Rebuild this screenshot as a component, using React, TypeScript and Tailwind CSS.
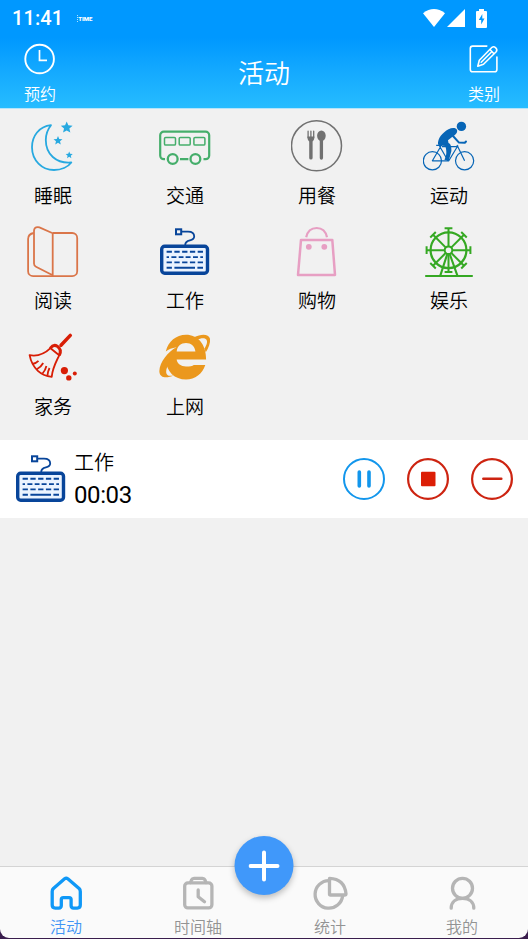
import type { ReactNode } from 'react';

const star = (cx: number, cy: number, r: number) =>
  Array.from({ length: 10 }, (_, i) => {
    const d = i % 2 ? r * 0.45 : r;
    const a = (Math.PI / 5) * i - Math.PI / 2;
    return `${cx + d * Math.cos(a)},${cy + d * Math.sin(a)}`;
  }).join(' ');

function Icon({ children, className }: { children: ReactNode; className?: string }) {
  return (
    <svg viewBox="0 0 52 52" className={`h-[52px] w-[52px] shrink-0 ${className ?? ''}`} fill="none" stroke="currentColor" strokeLinejoin="round">
      {children}
    </svg>
  );
}

function MoonIcon() {
  return (
    <Icon className="text-[#27a9e0]">
      <path d="M24 5.2C12 6.5 5 16 5 27.2C5 40.3 15 50 27 50C34 50 41 47 44.3 42.5C29 43.8 18.8 34 18.8 20C18.8 14.5 20.7 9.3 24 5.2Z" strokeWidth="1.8" />
      <g fill="currentColor" stroke="none">
        <polygon points={star(39.7, 7.6, 6.2)} />
        <polygon points={star(31, 20.6, 4.7)} />
        <polygon points={star(42.2, 35.2, 3.7)} />
      </g>
    </Icon>
  );
}

function BusIcon() {
  return (
    <Icon className="text-[#45ae6b]">
      <path d="M6 39.2H4.8A3.6 3.6 0 0 1 1.2 35.6V15.2A3.6 3.6 0 0 1 4.8 11.6H46.6A3.6 3.6 0 0 1 50.2 15.2V35.6A3.6 3.6 0 0 1 46.6 39.2H44.5M21 39.2H29.4" strokeWidth="2.2" />
      <rect x="5.5" y="17.4" width="11" height="7.7" rx="1.2" strokeWidth="1.5" />
      <rect x="20.2" y="17.4" width="11" height="7.7" rx="1.2" strokeWidth="1.5" />
      <rect x="34.9" y="17.4" width="11" height="7.7" rx="1.2" strokeWidth="1.5" />
      <circle cx="13.7" cy="39" r="4.9" strokeWidth="2.3" />
      <circle cx="36.4" cy="39" r="4.9" strokeWidth="2.3" />
    </Icon>
  );
}

function DiningIcon() {
  return (
    <Icon className="text-[#717171]">
      <circle cx="25.5" cy="25.8" r="25" strokeWidth="1.5" />
      <path d="M17.1 11.2V17.5M19.9 11.2V17.5M22.7 11.2V17.5" strokeWidth="1.3" strokeLinecap="round" />
      <path d="M16.5 16.5H23.3V18C23.3 20 22 21 21.6 21.5V38Q21.6 39.6 19.9 39.6Q18.2 39.6 18.2 38V21.5C17.8 21 16.5 20 16.5 18Z" fill="currentColor" stroke="none" />
      <ellipse cx="30.4" cy="15.8" rx="4.3" ry="5.3" fill="currentColor" stroke="none" />
      <path d="M30.4 19V38" strokeWidth="3.3" strokeLinecap="round" />
    </Icon>
  );
}

function BikeIcon() {
  return (
    <Icon className="text-[#0765b6]">
      <circle cx="9.4" cy="40.8" r="9.1" strokeWidth="1.2" />
      <circle cx="41.6" cy="40.8" r="9.1" strokeWidth="1.2" />
      <path d="M18 26L9.4 40.8H25.8L35 25.5M16.5 26L25 40.8M34 25L41.6 40.8M19 26.6H34.5M13.2 25.3H19" strokeWidth="1.2" />
      <circle cx="38.4" cy="6.4" r="4.7" fill="currentColor" stroke="none" />
      <path d="M15 24.5C14.5 18.5 19.5 12.5 25.5 9.3C29 7.5 33 7.6 34 10C34.8 12 33 14.6 30.4 16L25 20.2L25.5 23C28 24 28.5 27 28.4 31L25.8 40.8L21.4 39.8C23.5 36 24 32 22.4 26L17 25.4Z" fill="currentColor" stroke="none" />
      <path d="M30 16L36 22.6L41.8 22.8L43 21.5" strokeWidth="2" strokeLinecap="round" />
    </Icon>
  );
}

function BookIcon() {
  return (
    <Icon className="text-[#da7549]">
      <path d="M25.7 7H45.2A5 5 0 0 1 50.2 12V45.2A5 5 0 0 1 45.2 50.2H6.1A5 5 0 0 1 1.1 45.2V13Q1.1 8 6.8 7" strokeWidth="1.8" />
      <path d="M10.8 1.1Q7 1.1 7 5V37.5Q7 39.8 9 40.7L25.7 49.3V7.2L12.4 1.4Q11.6 1.1 10.8 1.1Z" strokeWidth="1.8" />
    </Icon>
  );
}

function KeyboardIcon() {
  return (
    <Icon className="text-[#08459a]">
      <rect x="2.7" y="20.2" width="45.8" height="27" rx="3" strokeWidth="3.4" fill="#eaf3ff" />
      <path d="M26.2 19C26.2 12.5 35.2 16.3 35.2 10.5C35.2 6.8 32.5 5.7 29 5.7H23" strokeWidth="1.8" />
      <rect x="17" y="3.3" width="5.2" height="5" strokeWidth="2" strokeLinejoin="miter" />
      <path d="M7.6 25.8H44M7.6 36.4H44" strokeWidth="1.9" strokeDasharray="5.3 2.47" />
      <path d="M7.6 31.1H10M12.4 31.1H17.4M19.7 31.1H24.5M26.6 31.1H31.6M34 31.1H38.9M41.3 31.1H44" strokeWidth="1.9" />
      <path d="M7.6 41.8H12.9M15.4 41.8H36M38.4 41.8H44" strokeWidth="1.9" />
    </Icon>
  );
}

function BagIcon() {
  return (
    <Icon className="text-[#e79fc3]">
      <path d="M10 13.9H41.3L44 49H7Z" strokeWidth="2.5" />
      <path d="M15.2 11.2C16.5 5.3 20.3 2 25.7 2S34.7 5.3 36 11.2" strokeWidth="2.2" />
      <circle cx="17.8" cy="20.8" r="2.9" fill="currentColor" stroke="none" />
      <circle cx="33.3" cy="20.8" r="2.9" fill="currentColor" stroke="none" />
    </Icon>
  );
}

function FerrisWheelIcon() {
  return (
    <Icon className="text-[#35a823]">
      <circle cx="25.5" cy="24.2" r="17.9" strokeWidth="2.2" />
      <circle cx="25.5" cy="24.2" r="3.8" strokeWidth="2" />
      {[0, 45, 90, 135, 180, 225, 270, 315].map((deg) => (
        <path key={deg} d="M25.5 20.5V2.3M21.6 2.3H29.4" strokeWidth="2" transform={`rotate(${deg} 25.5 24.2)`} />
      ))}
      <path d="M24.3 28L17.3 49.6M26.7 28L34.4 49.6" strokeWidth="2.1" />
      <path d="M3 50H49" strokeWidth="2.1" strokeLinecap="round" />
    </Icon>
  );
}

function BroomIcon() {
  return (
    <Icon className="text-[#d81e06]">
      <path d="M34 14.2L43.3 4.4" strokeWidth="3.5" strokeLinecap="round" />
      <path d="M2.6 24.2C10 25.5 17.5 23 23.5 17.2L32.2 24.3C29 31 25.5 37 24.7 45.8C14.5 44.8 5.3 38 2.6 24.2Z" strokeWidth="1.8" />
      <path d="M23.2 17.3C25.5 14.2 28 13.8 30.3 15.3C33.5 17.5 34 21 32.3 24.4" strokeWidth="3" />
      <path d="M5.5 33C8.5 32.3 10 31.3 11.5 29.8M9.8 38.3C13.2 36.4 14.8 34.6 16.2 32M15.5 42.5C18 39.8 18.8 37.8 19.4 35M20.4 44.7C20.6 41 21.5 39 22.5 37" strokeWidth="1.8" />
      <g fill="currentColor" stroke="none">
        <circle cx="37.4" cy="39.6" r="3.6" />
        <circle cx="41.8" cy="46.9" r="2.7" />
        <circle cx="47.8" cy="42.6" r="2" />
      </g>
    </Icon>
  );
}

// browser logo: letter body plus the two visible parts of the orbit
function BrowserIcon() {
  return (
    <Icon className="text-[#eb981d]">
      <g fill="currentColor" stroke="none" fillRule="evenodd">
        <path d="M6.8 20.5C9.3 10.5 17 3.8 27 3.8C38.5 3.8 47.3 13 47.1 28.6H17.7C18 32.7 22 35.6 27 35.6C30.8 35.6 33.4 35 34.8 34H46.3C43.5 42.7 36 48.5 27 48.5C15.5 48.5 7.6 40.5 6.8 29.5C9.5 24 13.5 19.5 17.5 16.3C13 17 9.5 18.3 6.8 20.5ZM17.7 20.6H36.4C36 15.2 32 11.9 27 11.9S18 15.2 17.7 20.6Z" />
        <path d="M17.5 16.3C9 20.5 -.3 32.5 .4 41C1 47.5 8.5 47.5 14.8 44.2C10.5 45.6 7.6 44.8 7.2 41.5C7 38.5 8.2 35.8 9.3 33.8L12 24Z" />
        <path d="M35 6.2C42 2.8 49.7 2.6 51 7.7C51.6 12 49.5 17 46.8 21.3L45.4 17.5C48 13.8 48.8 10.2 47.3 8.4C45.5 6.5 41.3 7.2 38.3 8.8Z" />
      </g>
    </Icon>
  );
}

const activities = [
  { name: '睡眠', icon: <MoonIcon /> },
  { name: '交通', icon: <BusIcon /> },
  { name: '用餐', icon: <DiningIcon /> },
  { name: '运动', icon: <BikeIcon /> },
  { name: '阅读', icon: <BookIcon /> },
  { name: '工作', icon: <KeyboardIcon /> },
  { name: '购物', icon: <BagIcon /> },
  { name: '娱乐', icon: <FerrisWheelIcon /> },
  { name: '家务', icon: <BroomIcon /> },
  { name: '上网', icon: <BrowserIcon /> },
];

const tabs = [
  {
    name: '活动',
    icon: (
      <path d="M18.8 2.8L30.1 12.5Q31.3 13.7 31.3 15.4V29.1Q31.3 32.1 28.3 32.1H24.6Q22.1 32.1 22.1 29.6V23.6Q22.1 21.6 20.1 21.6H14.3Q12.3 21.6 12.3 23.6V29.6Q12.3 32.1 9.8 32.1H6.2Q3.2 32.1 3.2 29.1V15.4Q3.2 13.7 4.4 12.5L15.6 2.8Q17.2 1.6 18.8 2.8Z" />
    ),
  },
  {
    name: '时间轴',
    icon: (
      <>
        <rect x="3.7" y="6.9" width="27.2" height="25" rx="3.2" />
        <path d="M9.5 6.5L10.5 4Q11.2 2.4 13 2.4H21.5Q23.3 2.4 24 4L25 6.5M17.2 14V20.8L23.5 25.8" />
      </>
    ),
  },
  {
    name: '统计',
    icon: (
      <>
        <path d="M16 4.6A13.8 13.8 0 1 0 29.6 20" />
        <path d="M16.5 2.4Q31.5 3 33 17.8Q33 19 31.5 19H17.5Q16.5 19 16.5 18Z" />
      </>
    ),
  },
  {
    name: '我的',
    icon: (
      <>
        <circle cx="17.5" cy="12.3" r="10" />
        <path d="M6.2 32.2C6.2 26 10.8 22.4 17.5 22.4S28.8 26 28.8 32.2" />
      </>
    ),
  },
];

function StatusBar() {
  return (
    <div className="flex h-9 items-center pl-3 pr-[41px] font-[Roboto,sans-serif]">
      <span className="text-[20px] font-medium leading-none tracking-[0.1px]">11:41</span>
      <span className="ml-3.5 border-l border-dotted border-white/70 text-[6px] font-black leading-[7px]">TIME</span>
      <div className="ml-auto flex items-center">
        <svg className="h-[18px] w-[22px]" viewBox="0 0 22 18" fill="currentColor">
          <path d="M0 4.3Q11-4.1 22 4.3L11 18Z" />
        </svg>
        <svg className="ml-0.5 h-[18px] w-[18px]" viewBox="0 0 18 18" fill="currentColor">
          <path d="M18 0V18H0Z" />
        </svg>
        <svg className="ml-[11px] h-[19px] w-[11px]" viewBox="0 0 11 19">
          <path d="M3 0H8V2H10Q11 2 11 3V18Q11 19 10 19H1Q0 19 0 18V3Q0 2 1 2H3Z" fill="white" />
          <path d="M6.3 5L2.8 11H5.2V15.5L8.5 9.5H6.3Z" fill="#0099ff" />
        </svg>
      </div>
    </div>
  );
}

function Header() {
  return (
    <header className="h-[109px] border-b border-[#b5e4fa] bg-linear-to-b from-[#0098ff] from-35% to-[#26bcff] text-white">
      <StatusBar />
      <div className="grid h-[72px] grid-cols-3 pl-6 pr-7">
        <button className="flex w-8 flex-col items-center justify-self-start pt-[7px]">
          <svg className="h-8 w-8" viewBox="0 0 32 32" fill="none" stroke="currentColor" strokeWidth="1.9">
            <circle cx="15.6" cy="16" r="14.3" />
            <path d="M15.5 7V17.3H23" strokeWidth="1.7" />
          </svg>
          <span className="mt-1.5 whitespace-nowrap text-base font-[350] leading-6">预约</span>
        </button>
        <h1 className="translate-x-0.5 justify-self-center pt-[23px] text-[26px] font-[350] leading-none">活动</h1>
        <button className="flex w-8 flex-col items-center justify-self-end pt-[7px]">
          <svg className="h-8 w-8" viewBox="0 0 32 32" fill="none" stroke="currentColor" strokeWidth="1.6" strokeLinejoin="round" strokeLinecap="round">
            <path d="M18.8 3.1H4.6Q2.3 3.1 2.3 5.4V26.5Q2.3 28.8 4.6 28.8H26.6Q28.9 28.8 28.9 26.5V14" />
            <path d="M9.8 23.2L11.3 17.2L24 4.3Q25.8 3 27.7 4.8Q29.7 6.8 28.2 8.8L15.5 21.2ZM22 6.5L26 10.8M13.2 19.3L23.5 9" strokeWidth="1.6" />
          </svg>
          <span className="mt-1.5 whitespace-nowrap text-base font-[350] leading-6">类别</span>
        </button>
      </div>
    </header>
  );
}

function CurrentActivity() {
  return (
    <section className="flex h-[78px] items-center bg-white pl-[15px] pr-[15px]">
      <KeyboardIcon />
      <div className="ml-[7px] flex flex-col">
        <span className="text-[20px] font-[350] leading-8">工作</span>
        <span className="font-[Roboto,sans-serif] text-[24px] leading-[34px] tracking-[-0.4px]">00:03</span>
      </div>
      <div className="ml-auto flex gap-[22px]">
        <svg className="h-[42px] w-[42px] text-[#1296ec]" viewBox="0 0 42 42" fill="none" stroke="currentColor">
          <circle cx="21" cy="21" r="20" strokeWidth="2" />
          <path d="M16.3 14V28M26 14V28" strokeWidth="3.6" strokeLinecap="round" />
        </svg>
        <svg className="h-[42px] w-[42px] text-[#cd2411]" viewBox="0 0 42 42" fill="none" stroke="currentColor">
          <circle cx="21" cy="21" r="19.9" strokeWidth="2.2" />
          <rect x="14" y="13.8" width="14.5" height="14.5" rx="1" fill="#dc1e06" stroke="none" />
        </svg>
        <svg className="h-[42px] w-[42px] text-[#cd2411]" viewBox="0 0 42 42" fill="none" stroke="currentColor">
          <circle cx="21" cy="21" r="19.9" strokeWidth="2.2" />
          <path d="M12.3 20.8H30.3" strokeWidth="2.5" strokeLinecap="round" />
        </svg>
      </div>
    </section>
  );
}

function TabBar() {
  return (
    <div className="bg-[#3a1d4d] pb-[1.5px]">
      <nav className="relative grid h-[71.5px] grid-cols-4 rounded-b-[9px] border-t border-[#d4d4d4] bg-[#fafafa]">
        {tabs.map((tab, i) => (
          <button key={tab.name} className={`flex flex-col items-center pt-[9px] ${i === 0 ? 'text-[#4195f5]' : 'text-[#939393]'}`}>
            <svg className={`h-[35px] w-[35px] ${i === 0 ? 'text-[#0f98f7]' : 'text-[#b5b5b5]'}`} viewBox="0 0 35 35" fill="none" stroke="currentColor" strokeWidth="3.3" strokeLinecap="round" strokeLinejoin="round">
              {tab.icon}
            </svg>
            <span className="mt-[3px] text-base font-[350] leading-6">{tab.name}</span>
          </button>
        ))}
        <button className="absolute -top-[31px] left-1/2 flex h-[59px] w-[59px] -translate-x-1/2 items-center justify-center rounded-full bg-[#4098fa] text-white shadow-[0_3px_6px_rgba(0,0,0,0.25)]">
          <svg className="h-8 w-8" viewBox="0 0 32 32" stroke="currentColor" strokeWidth="4" strokeLinecap="round">
            <path d="M15.5 2.5V29.5M2 16H29" />
          </svg>
        </button>
      </nav>
    </div>
  );
}

export default function App() {
  return (
    <div className="flex h-[939px] w-[528px] flex-col overflow-hidden bg-[#f1f1f1] font-['Noto_Sans_CJK_SC',sans-serif] text-black">
      <Header />
      <main className="flex-1">
        <div className="grid h-[331px] auto-rows-[105.7px] grid-cols-4 pt-[11px]">
          {activities.map((item) => (
            <button key={item.name} className="flex flex-col items-center pr-[26px]">
              {item.icon}
              <span className="mt-[8.5px] text-[19px] font-[350] leading-7">{item.name}</span>
            </button>
          ))}
        </div>
        <CurrentActivity />
      </main>
      <TabBar />
    </div>
  );
}
